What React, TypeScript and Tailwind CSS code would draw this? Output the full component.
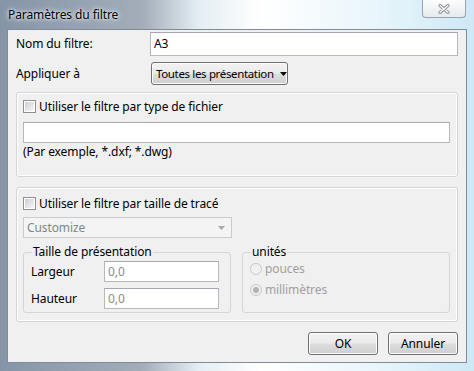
import React from "react";

const font = "font-['Segoe_UI','Noto_Sans',sans-serif]";

function CheckBox() {
  return (
    <span className="flex h-[13px] w-[13px] shrink-0 items-center justify-center border border-[#8e8f8f] bg-white">
      <span className="h-[9px] w-[9px] bg-gradient-to-br from-[#cbcfd5] to-[#f7f7f7]" />
    </span>
  );
}

function Radio({ checked }: { checked?: boolean }) {
  return (
    <span className="flex h-[12px] w-[12px] shrink-0 items-center justify-center rounded-full border border-[#c8c8c8] bg-[#f0f0f0]">
      {checked && <span className="h-[6px] w-[6px] rounded-full bg-[#b4b4b4]" />}
    </span>
  );
}

function TextBox({ value, muted, className }: { value?: string; muted?: boolean; className?: string }) {
  return (
    <div
      className={`flex items-center border border-[#b5b9bf] border-t-[#a5a9af] bg-white px-[3px] ${
        muted ? "text-[#8c8c8c]" : "text-black"
      } ${className ?? ""}`}
    >
      {value}
    </div>
  );
}

function WinButton({ children, className }: { children: React.ReactNode; className?: string }) {
  return (
    <div
      className={`flex items-center justify-center whitespace-nowrap rounded-[3px] border border-[#707070] bg-[linear-gradient(#f2f2f2_0%,#ebebeb_48%,#dddddd_52%,#cfcfcf_100%)] shadow-[inset_0_0_0_1px_#fcfcfc] ${className ?? ""}`}
    >
      {children}
    </div>
  );
}

export default function App() {
  return (
    <div
      className={`${font} flex h-[371px] w-[474px] flex-col overflow-hidden bg-[linear-gradient(90deg,#8595a8_0%,#a3adb9_30%,#e4eef4_42%,#ffffff_55%,#e8f5fb_80%,#cde9f5_100%)] text-[12px] leading-[14px] tracking-[-0.1px] text-black`}
    >
      {/* barre de titre */}
      <div className="relative flex h-[29px] shrink-0 items-center pl-[8px]">
        <span className="[text-shadow:0_0_6px_#ffffff,0_0_3px_#ffffff]">Paramètres du filtre</span>
        <div className="absolute right-[8px] top-0 flex h-[18px] w-[44px] items-center justify-center rounded-b-[4px] border border-t-0 border-[#9aa3ad] bg-[linear-gradient(#fbfcfd,#e6ebf0)]">
          <svg width="12" height="10" viewBox="0 0 12 10">
            <path d="M2 1.5l8 7M10 1.5l-8 7" stroke="#7d848c" strokeWidth="3" strokeLinecap="round" />
            <path d="M2 1.5l8 7M10 1.5l-8 7" stroke="#ffffff" strokeWidth="1.4" strokeLinecap="round" />
          </svg>
        </div>
      </div>

      {/* zone cliente */}
      <div className="mx-[7px] h-[334px] shrink-0 border border-[#7f8b98] bg-[#f0f0f0] pl-[8px] pr-[8px]">
        <div className="mt-[2px] flex h-[24px] items-center">
          <span className="w-[134px]">Nom du filtre:</span>
          <TextBox value="A3" className="h-[24px] flex-1" />
        </div>

        <div className="mt-[6px] flex h-[23px] items-center">
          <span className="w-[135px]">Appliquer à</span>
          <WinButton className="h-[23px] w-[137px] justify-start gap-[6px] overflow-hidden pl-[4px]">
            <span className="text-[11.5px] tracking-[-0.35px]">Toutes les présentation</span>
            <svg className="shrink-0" width="7" height="4" viewBox="0 0 7 4">
              <path d="M0 0h7L3.5 4z" fill="#000" />
            </svg>
          </WinButton>
        </div>

        {/* groupe type de fichier */}
        <div className="mt-[7px] h-[85px] rounded-[3px] border border-[#d5d5d5] shadow-[inset_0_0_0_1px_#ffffff] px-[6px] pt-[7px]">
          <div className="flex h-[13px] items-center gap-[3px]">
            <CheckBox />
            <span>Utiliser le filtre par type de fichier</span>
          </div>
          <TextBox className="mr-[1px] mt-[9px] h-[21px]" />
          <div className="mt-[1px] leading-[16px]">(Par exemple, *.dxf; *.dwg)</div>
        </div>

        {/* groupe taille de tracé */}
        <div className="mt-[10px] h-[135px] rounded-[3px] border border-[#d5d5d5] shadow-[inset_0_0_0_1px_#ffffff] px-[6px] pt-[9px]">
          <div className="flex h-[13px] items-center gap-[3px]">
            <CheckBox />
            <span>Utiliser le filtre par taille de tracé</span>
          </div>
          <div className="mt-[7px] flex h-[21px] w-[209px] items-center justify-between border border-[#c9ccd0] bg-[#f4f4f4] pl-[3px] pr-[6px] text-[#858585]">
            <span>Customize</span>
            <svg width="7" height="4" viewBox="0 0 7 4">
              <path d="M0 0h7L3.5 4z" fill="#a8a8a8" />
            </svg>
          </div>

          <div className="mt-[7px] flex gap-[11px]">
            <fieldset className="h-[68px] w-[208px] rounded-[3px] border border-[#d5d5d5] px-[7px]">
              <legend className="ml-[1px] px-[1px] leading-[14px]">Taille de présentation</legend>
              <div className="mt-[2px] flex h-[21px] items-center">
                <span className="w-[73px]">Largeur</span>
                <TextBox value="0,0" muted className="h-[21px] w-[115px]" />
              </div>
              <div className="mt-[6px] flex h-[21px] items-center">
                <span className="w-[73px]">Hauteur</span>
                <TextBox value="0,0" muted className="h-[21px] w-[115px]" />
              </div>
            </fieldset>

            <fieldset className="h-[68px] w-[208px] rounded-[3px] border border-[#d5d5d5] px-[7px]">
              <legend className="ml-[1px] px-[1px] leading-[14px]">unités</legend>
              <div className="mt-[2px] flex h-[16px] items-center gap-[3px] text-[#a0a0a0]">
                <Radio />
                <span>pouces</span>
              </div>
              <div className="mt-[5px] flex h-[16px] items-center gap-[3px] text-[#a0a0a0]">
                <Radio checked />
                <span>millimètres</span>
              </div>
            </fieldset>
          </div>
        </div>

        <div className="mt-[10px] flex justify-end gap-[10px]">
          <WinButton className="h-[23px] w-[70px]">OK</WinButton>
          <WinButton className="h-[23px] w-[70px]">Annuler</WinButton>
        </div>
      </div>
    </div>
  );
}
